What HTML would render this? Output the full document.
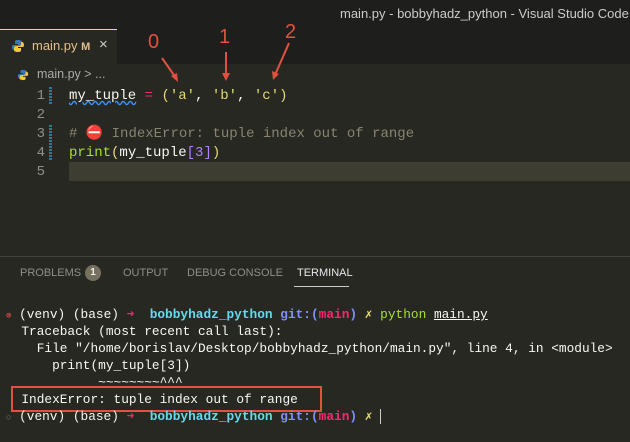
<!DOCTYPE html><html><head><style>
body{margin:0;width:630px;height:442px;background:#272822;overflow:hidden;position:relative;font-family:"Liberation Sans",sans-serif}
.a{position:absolute}
.mono{font-family:"Liberation Mono",monospace;white-space:pre}
</style></head><body>
<div class="a" style="left:0;top:0;width:630px;height:64px;background:#1e1f1c"></div>
<div class="a" style="left:340px;top:6px;font-size:13px;color:#ccc">main.py - bobbyhadz_python - Visual Studio Code</div>
<div class="a" style="left:0;top:29px;width:117px;height:35px;background:#272822;border-top:1px solid #e6db74"></div>
<svg class="a" style="left:11px;top:39px" width="14" height="14" viewBox="0 0 14 14"><path d="M7 1C4 1 4 2 4 3v2h3v1H2C1 6 1 8 1 8c0 2 1 3 2 3h1V9c0-1 1-2 2-2h3c1 0 2-1 2-2V3c0-1-1-2-4-2z" fill="#3b78b0"/><path d="M7 13c3 0 3-1 3-2V9H7V8h5c1 0 1-2 1-2 0-2-1-3-2-3h-1v2c0 1-1 2-2 2H5c-1 0-2 1-2 2v2c0 1 1 2 4 2z" fill="#f2c933"/></svg>
<div class="a" style="left:32px;top:38px;font-size:13px;color:#e2c08d">main.py <span style="font-size:11px;font-weight:bold">M</span></div>
<div class="a" style="left:99px;top:36px;font-size:15px;color:#ccc">×</div>
<svg class="a" style="left:17px;top:69px" width="12" height="12" viewBox="0 0 14 14"><path d="M7 1C4 1 4 2 4 3v2h3v1H2C1 6 1 8 1 8c0 2 1 3 2 3h1V9c0-1 1-2 2-2h3c1 0 2-1 2-2V3c0-1-1-2-4-2z" fill="#3b78b0"/><path d="M7 13c3 0 3-1 3-2V9H7V8h5c1 0 1-2 1-2 0-2-1-3-2-3h-1v2c0 1-1 2-2 2H5c-1 0-2 1-2 2v2c0 1 1 2 4 2z" fill="#f2c933"/></svg>
<div class="a" style="left:37px;top:67px;font-size:12.5px;color:#aaa">main.py &gt; ...</div>
<div class="a" style="left:69px;top:162px;width:561px;height:19px;background:#3e3d32"></div>
<div class="a mono" style="left:30px;top:87px;font-size:14px;line-height:19px;color:#90908a;text-align:right;width:15px">1
2
3
4
5</div>
<div class="a" style="left:49px;top:87px;width:3px;height:17px;background:repeating-linear-gradient(#2a7d8c 0 2px,transparent 2px 3px)"></div>
<div class="a" style="left:49px;top:125px;width:3px;height:36px;background:repeating-linear-gradient(#2a7d8c 0 2px,transparent 2px 3px)"></div>
<div class="a mono" style="left:69px;top:87px;font-size:14px;line-height:19px;color:#f8f8f2"><span style="text-decoration:underline wavy #3794ff">my_tuple</span> <span style="color:#f92672">=</span> <span style="color:#e6db74">(</span><span style="color:#e6db74">'a'</span>, <span style="color:#e6db74">'b'</span>, <span style="color:#e6db74">'c'</span><span style="color:#e6db74">)</span>

<span style="color:#88846f"># <span style="color:#e03030">⛔</span> IndexError: tuple index out of range</span>
<span style="color:#a6e22e">print</span><span style="color:#e6db74">(</span>my_tuple<span style="color:#ae81ff">[3]</span><span style="color:#e6db74">)</span>
</div>
<svg class="a" style="left:0;top:0" width="630" height="100"><g stroke="#e0523f" stroke-width="2" fill="#e0523f">
<line x1="162" y1="58" x2="176" y2="78"/><polygon points="178,82 171,76 177,73" stroke="none"/>
<line x1="226" y1="52" x2="226" y2="76"/><polygon points="226,81 222,73 230,73" stroke="none"/>
<line x1="289" y1="43" x2="275" y2="75"/><polygon points="273,80 272,71 279,74" stroke="none"/></g>
<g font-family="Liberation Sans" font-size="20" fill="#e0523f"><text x="148" y="48">0</text><text x="219" y="43">1</text><text x="285" y="38">2</text></g></svg>
<div class="a" style="left:0;top:256px;width:630px;height:1px;background:#414339"></div>
<div class="a" style="left:20px;top:267px;font-size:11px;color:#8f8f88">PROBLEMS</div>
<div class="a" style="left:85px;top:265px;width:16px;height:16px;border-radius:8px;background:#75715e;color:#eee;font-size:10px;text-align:center;line-height:16px;font-weight:bold">1</div>
<div class="a" style="left:123px;top:267px;font-size:11px;color:#8f8f88">OUTPUT</div>
<div class="a" style="left:187px;top:267px;font-size:11px;color:#8f8f88">DEBUG CONSOLE</div>
<div class="a" style="left:297px;top:267px;font-size:11px;color:#e7e7e7">TERMINAL</div>
<div class="a" style="left:294px;top:286px;width:55px;height:1px;background:#ccc"></div>
<div class="a" style="left:11px;top:386px;width:311px;height:26px;border:2px solid #e0523f;box-sizing:border-box"></div>
<div class="a mono" style="left:6px;top:306px;font-size:12.8px;line-height:17px;color:#f8f8f2"><span style="color:#e05050;font-size:9px;line-height:10px">⊗</span> (venv) (base) <span style="color:#f92672">➜</span>  <b style="color:#66d9ef">bobbyhadz_python</b> <b style="color:#7f8fff">git:(<span style="color:#f92672">main</span>)</b> <b style="color:#e6db74">✗</b> <span style="color:#a6e22e">python</span> <u>main.py</u>
  Traceback (most recent call last):
    File "/home/borislav/Desktop/bobbyhadz_python/main.py", line 4, in &lt;module&gt;
      print(my_tuple[3])
            ~~~~~~~~^^^
  IndexError: tuple index out of range
<span style="color:#888;font-size:9px;line-height:10px">○</span> (venv) (base) <span style="color:#f92672">➜</span>  <b style="color:#66d9ef">bobbyhadz_python</b> <b style="color:#7f8fff">git:(<span style="color:#f92672">main</span>)</b> <b style="color:#e6db74">✗</b> <span style="border-left:1px solid #ccc"></span></div>
</body></html>
